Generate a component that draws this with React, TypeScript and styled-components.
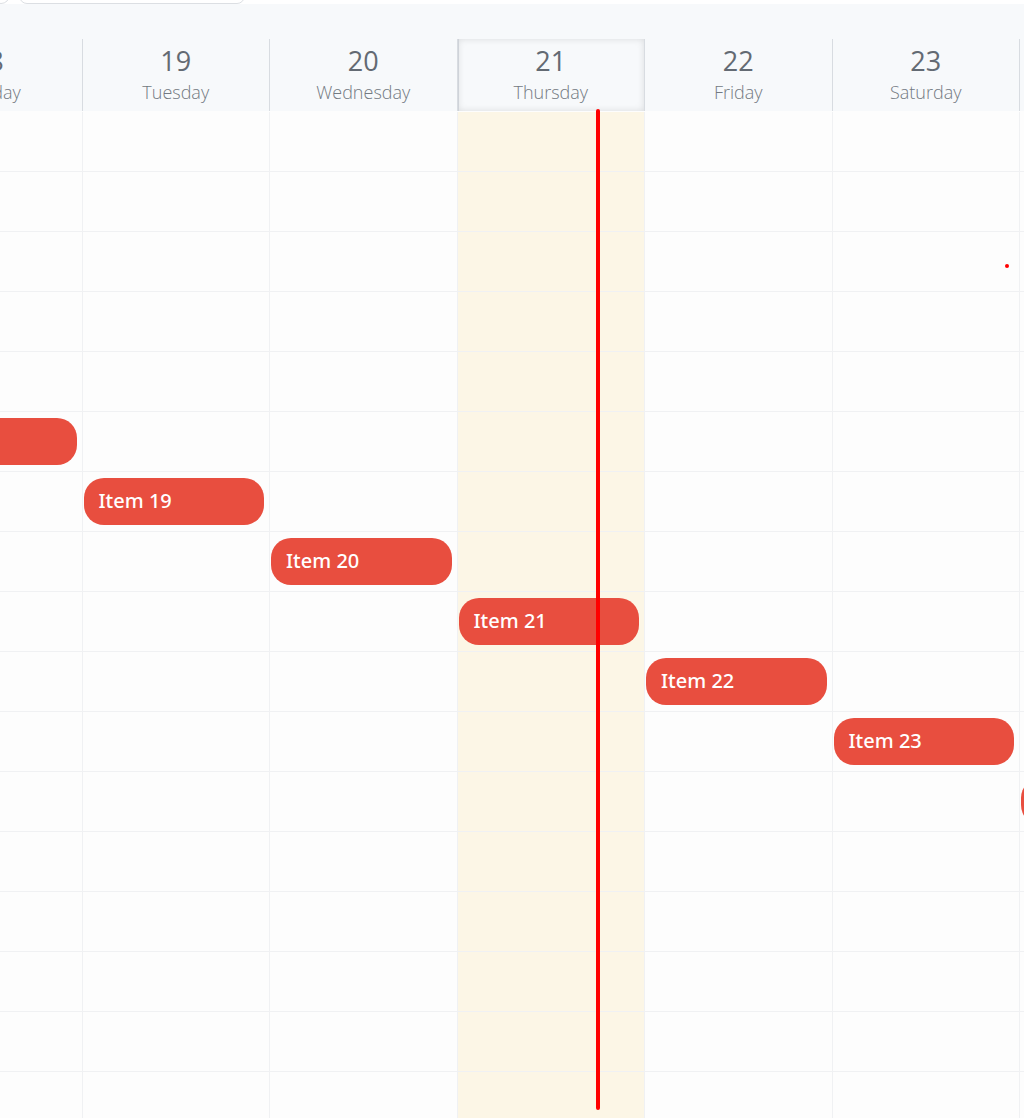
import React from "react";
import styled, { createGlobalStyle } from "styled-components";

const GlobalStyle = createGlobalStyle`
  html, body { margin: 0; padding: 0; background: #fdfdfd; }
  body { font-family: "Open Sans", "Noto Sans", sans-serif; }
`;

const COL_W = 187.5;
const ROW_H = 60;
const TODAY = 21;

const days = [
  { n: 18, name: "Monday" },
  { n: 19, name: "Tuesday" },
  { n: 20, name: "Wednesday" },
  { n: 21, name: "Thursday" },
  { n: 22, name: "Friday" },
  { n: 23, name: "Saturday" },
  { n: 24, name: "Sunday" },
];

const Page = styled.div`
  position: relative;
  width: 1024px;
  height: 1118px;
  overflow: hidden;
  background: #fdfdfd;
`;

const TopStrip = styled.div`
  height: 4px;
  background: #ffffff;
  display: flex;
  align-items: flex-end;
  overflow: hidden;
`;

const RoundBtn = styled.div`
  flex: none;
  width: 16px;
  height: 16px;
  margin-left: -8px;
  border: 1px solid #dcdfe3;
  border-radius: 50%;
  background: #fff;
`;

const SearchBox = styled.div`
  flex: none;
  width: 224px;
  height: 30px;
  margin-left: 9px;
  border: 1px solid #dcdfe3;
  border-radius: 8px;
  background: #fff;
`;

const Header = styled.div`
  background: #f7f9fb;
  padding-top: 35px;
`;

const Track = styled.div`
  display: flex;
  margin-left: -105px;
  width: ${COL_W * 7}px;
`;

const HeadCell = styled.div<{ $today?: boolean }>`
  flex: none;
  width: ${COL_W}px;
  height: 72px;
  box-sizing: border-box;
  border-right: 1px solid #d8dce1;
  display: flex;
  flex-direction: column;
  align-items: center;
  padding-top: 4px;
  ${(p) =>
    p.$today
      ? `box-shadow: inset 1px 0 0 #cfd3d9, inset 0 0 7px rgba(0,0,0,0.12);`
      : ""}
`;

const DayNum = styled.div`
  font-size: 27px;
  line-height: 36px;
  color: #636a73;
`;

const DayName = styled.div`
  font-size: 18px;
  font-weight: 300;
  line-height: 26px;
  color: #737a82;
`;

const Body = styled.div`
  position: relative;
  padding-top: 1px;
`;

const Row = styled.div`
  display: flex;
  margin-left: -105px;
  width: ${COL_W * 7}px;
`;

const Cell = styled.div<{ $today?: boolean }>`
  flex: none;
  width: ${COL_W}px;
  height: ${ROW_H}px;
  box-sizing: border-box;
  border-right: 1px solid #f0f1f3;
  border-bottom: 1px solid #f0f1f3;
  padding: 6px 5px 0 1px;
  background: ${(p) => (p.$today ? "#fcf6e6" : "transparent")};
`;

const Item = styled.div`
  height: 47px;
  box-sizing: border-box;
  border-radius: 20px;
  background: #e84e3f;
  color: #ffffff;
  font-family: "Noto Sans", "Open Sans", sans-serif;
  font-size: 20px;
  font-weight: 500;
  line-height: 45px;
  padding-left: 15px;
  white-space: nowrap;
  overflow: hidden;
`;

const NowLine = styled.div`
  position: absolute;
  left: 596px;
  top: -2px;
  width: 4px;
  height: 1001px;
  border-radius: 2px;
  background: #ff0000;
`;

const Dot = styled.div`
  position: absolute;
  left: 1005px;
  top: 153px;
  width: 4px;
  height: 4px;
  border-radius: 50%;
  background: #ff0000;
`;

const ROWS = 17;

export default function App() {
  return (
    <>
      <GlobalStyle />
      <Page>
        <TopStrip>
          <RoundBtn />
          <SearchBox />
        </TopStrip>
        <Header>
          <Track>
            {days.map((d) => (
              <HeadCell key={d.n} $today={d.n === TODAY}>
                <DayNum>{d.n}</DayNum>
                <DayName>{d.name}</DayName>
              </HeadCell>
            ))}
          </Track>
        </Header>
        <Body>
          {Array.from({ length: ROWS }).map((_, r) => (
            <Row key={r}>
              {days.map((d) => (
                <Cell key={d.n} $today={d.n === TODAY}>
                  {d.n - 13 === r ? <Item>Item {d.n}</Item> : null}
                </Cell>
              ))}
            </Row>
          ))}
          <NowLine />
          <Dot />
        </Body>
      </Page>
    </>
  );
}
